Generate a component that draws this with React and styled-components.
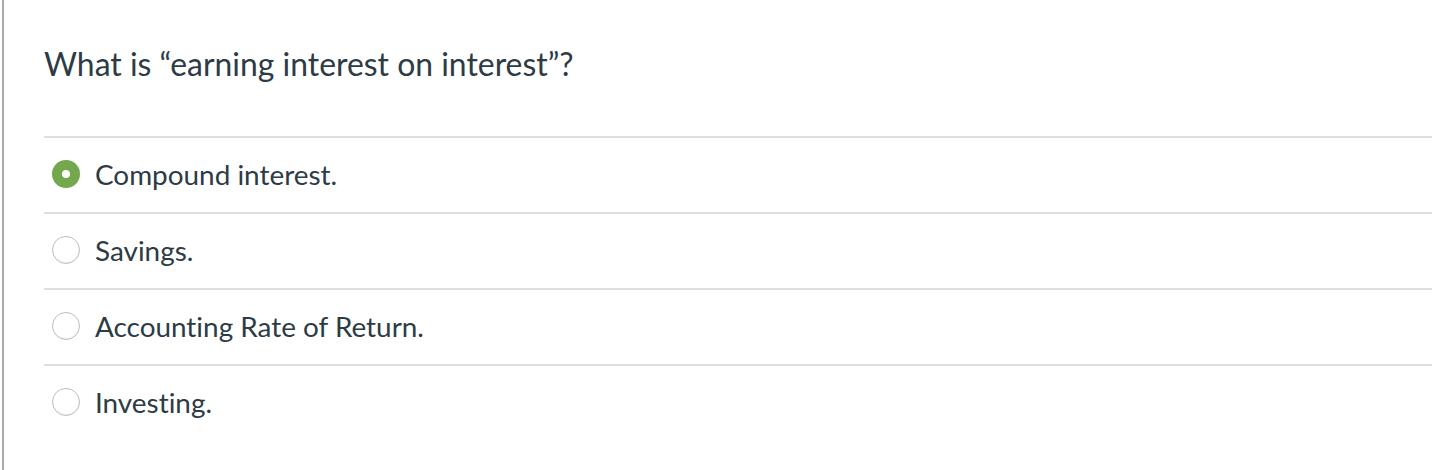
import React from "react";
import styled, { createGlobalStyle } from "styled-components";

const answers = [
  { id: 1, text: "Compound interest.", selected: true },
  { id: 2, text: "Savings.", selected: false },
  { id: 3, text: "Accounting Rate of Return.", selected: false },
  { id: 4, text: "Investing.", selected: false },
];

const GlobalStyle = createGlobalStyle`
  html, body {
    margin: 0;
    padding: 0;
    background: #fff;
  }
  body {
    font-family: Lato, "Open Sans", "Liberation Sans", sans-serif;
    font-variant-ligatures: none;
    color: #2d3b45;
  }
`;

export default function App() {
  return (
    <>
      <GlobalStyle />
      <Page>
        <Question>
          <Title>What is “earning interest on interest”?</Title>
          <Answers>
            {answers.map((a) => (
              <Answer key={a.id}>
                <Radio selected={a.selected} />
                <Label>{a.text}</Label>
              </Answer>
            ))}
          </Answers>
        </Question>
      </Page>
    </>
  );
}

const Page = styled.div`
  padding-left: 2px;
  height: 470px;
  box-sizing: border-box;
`;

const Question = styled.div`
  height: 100%;
  border-left: 2px solid #a9a9a9;
  padding: 0 22px 0 40px;
  box-sizing: border-box;
`;

const Title = styled.h2`
  margin: 0;
  padding-top: 44px;
  height: 136px;
  box-sizing: border-box;
  font-size: 31.9px;
  font-weight: 400;
  line-height: 40px;
`;

const Answers = styled.div`
  display: flex;
  flex-direction: column;
`;

const Answer = styled.div`
  display: flex;
  align-items: center;
  height: 71px;
  padding: 0 0 3px 8px;
  border-top: 2px solid #dedede;
`;

const Radio = styled.span`
  flex: none;
  position: relative;
  width: 28px;
  height: 28px;
  margin-top: 1px;
  border-radius: 50%;
  box-sizing: border-box;
  background: ${(p) => (p.selected ? "#73a84c" : "#fff")};
  border: ${(p) => (p.selected ? "none" : "1.5px solid #bdbdbd")};
  box-shadow: ${(p) =>
    p.selected ? "none" : "inset 0 -1px 1px rgba(0,0,0,0.06)"};
  &::after {
    content: "";
    display: ${(p) => (p.selected ? "block" : "none")};
    position: absolute;
    left: 50%;
    top: 50%;
    width: 8px;
    height: 8px;
    margin: -4px 0 0 -4px;
    border-radius: 50%;
    background: #fff;
  }
`;

const Label = styled.span`
  margin-left: 15px;
  font-size: 27.9px;
  line-height: 32px;
`;
